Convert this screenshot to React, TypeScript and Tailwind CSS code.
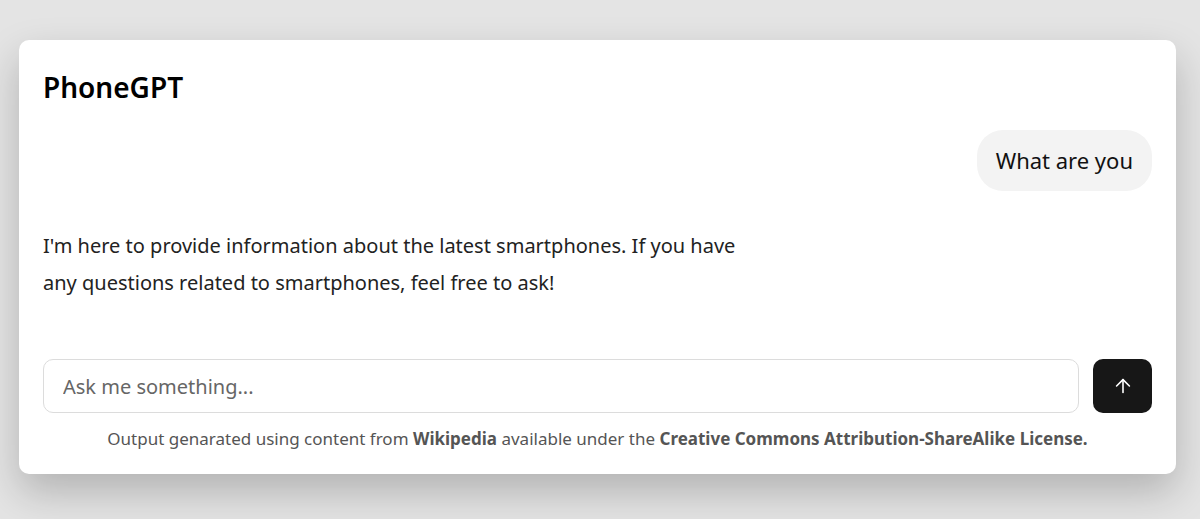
import { ArrowUp } from 'lucide-react';

const font = { fontFamily: '"Noto Sans", "Open Sans", sans-serif' };

export default function App() {
  return (
    <div className="min-h-[519px] w-full bg-[#e4e4e4] pt-[40px]" style={font}>
      <div className="ml-[19px] flex w-[1157px] flex-col rounded-[10px] bg-white px-[24px] pb-[23px] pt-[27px] shadow-[0_18px_40px_rgba(0,0,0,0.22)]">
        <h1 className="text-[28px] font-semibold leading-[40px] text-black">PhoneGPT</h1>

        <div className="mt-[23px] flex justify-end">
          <div className="rounded-[26px] bg-[#f3f3f3] px-[19px] py-[13px] text-[22px] leading-[35px] text-[#111]">What are you</div>
        </div>

        <p className="mt-[36px] max-w-[705px] text-[20px] leading-[37px] text-[#222]">
          I'm here to provide information about the latest smartphones. If you have any questions related to smartphones, feel free to ask!
        </p>

        <div className="mt-[58px] flex items-stretch gap-[14px]">
          <input
            placeholder="Ask me something..."
            className="h-[54px] flex-1 rounded-[10px] border border-[#dcdcdc] px-[19px] text-[20px] text-[#222] outline-none placeholder:text-[#666]"
            style={font}
          />
          <button type="button" className="flex h-[54px] w-[59px] items-center justify-center rounded-[10px] bg-[#171717] text-white">
            <ArrowUp size={22} strokeWidth={1.75} />
          </button>
        </div>

        <p className="mt-[14px] text-center text-[17px] leading-[24px] text-[#555]">
          Output genarated using content from <b className="font-bold">Wikipedia</b> available under the <b className="font-bold">Creative Commons Attribution-ShareAlike License.</b>
        </p>
      </div>
    </div>
  );
}
